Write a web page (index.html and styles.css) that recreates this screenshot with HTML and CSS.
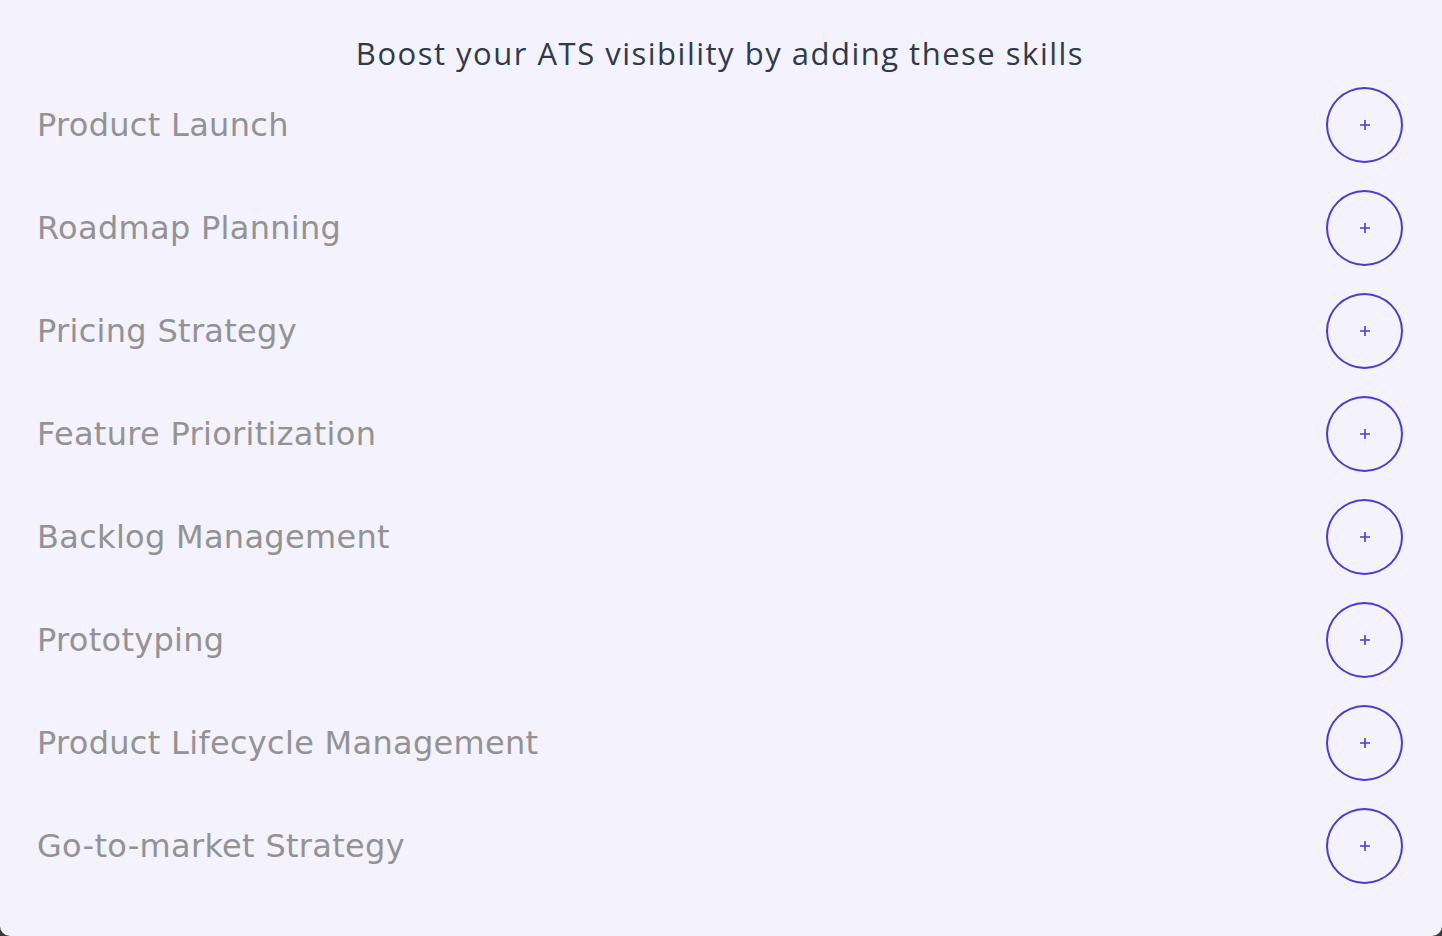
FILE: index.html
```html
<!DOCTYPE html>
<html lang="en">
<head>
    <meta charset="UTF-8">
    <title>Skill Suggestions</title>
    <link rel="stylesheet" href="styles.css">
</head>
<body>
    <div class="panel">
        <h2 class="panel-title">Boost your ATS visibility by adding these skills</h2>
        <ul class="skill-list">
            <li class="skill-row"><span class="skill-name">Product Launch</span><button class="add-btn"><svg width="12" height="12" viewBox="0 0 12 12"><path d="M6 1v10M1 6h10"/></svg></button></li>
            <li class="skill-row"><span class="skill-name">Roadmap Planning</span><button class="add-btn"><svg width="12" height="12" viewBox="0 0 12 12"><path d="M6 1v10M1 6h10"/></svg></button></li>
            <li class="skill-row"><span class="skill-name">Pricing Strategy</span><button class="add-btn"><svg width="12" height="12" viewBox="0 0 12 12"><path d="M6 1v10M1 6h10"/></svg></button></li>
            <li class="skill-row"><span class="skill-name">Feature Prioritization</span><button class="add-btn"><svg width="12" height="12" viewBox="0 0 12 12"><path d="M6 1v10M1 6h10"/></svg></button></li>
            <li class="skill-row"><span class="skill-name">Backlog Management</span><button class="add-btn"><svg width="12" height="12" viewBox="0 0 12 12"><path d="M6 1v10M1 6h10"/></svg></button></li>
            <li class="skill-row"><span class="skill-name">Prototyping</span><button class="add-btn"><svg width="12" height="12" viewBox="0 0 12 12"><path d="M6 1v10M1 6h10"/></svg></button></li>
            <li class="skill-row"><span class="skill-name">Product Lifecycle Management</span><button class="add-btn"><svg width="12" height="12" viewBox="0 0 12 12"><path d="M6 1v10M1 6h10"/></svg></button></li>
            <li class="skill-row"><span class="skill-name">Go-to-market Strategy</span><button class="add-btn"><svg width="12" height="12" viewBox="0 0 12 12"><path d="M6 1v10M1 6h10"/></svg></button></li>
        </ul>
    </div>
</body>
</html>
```

FILE: styles.css
```css
body {
    margin: 0;
    background-color: #3a3a3a;
    font-family: 'Open Sans', sans-serif;
}
.panel {
    height: 936px;
    box-sizing: border-box;
    background-color: #f3f2fd;
    border-radius: 0 0 10px 10px;
    padding: 33px 39px 0 37px;
}
.panel-title {
    margin: 0;
    text-align: center;
    font-size: 31px;
    line-height: 40px;
    font-weight: 400;
    letter-spacing: 1.5px;
    color: #2f3a4b;
}
.skill-list {
    list-style: none;
    margin: 0;
    padding: 0;
}
.skill-row {
    display: flex;
    align-items: center;
    justify-content: space-between;
    height: 103px;
}
.skill-name {
    font-family: 'DejaVu Sans', sans-serif;
    font-size: 32px;
    letter-spacing: 0.3px;
    color: #939393;
    font-weight: 400;
}
.add-btn {
    width: 77px;
    height: 76px;
    border-radius: 50%;
    border: 2px solid #4a3ad8;
    background: none;
    display: flex;
    align-items: center;
    justify-content: center;
    padding: 0;
    cursor: pointer;
}
.add-btn svg {
    stroke: #4a3ad8;
    stroke-width: 1.6;
    fill: none;
}
```
